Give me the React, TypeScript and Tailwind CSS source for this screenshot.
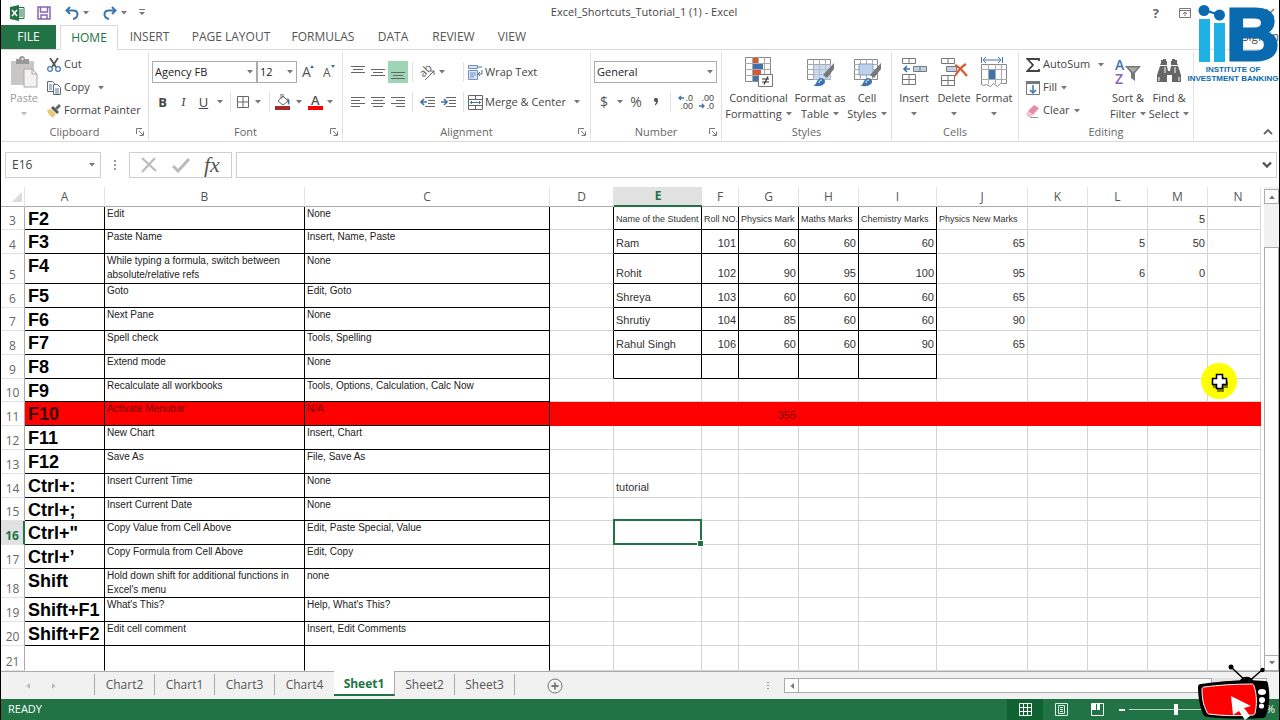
import { useState, type ReactNode } from "react";
import clsx from "clsx";

type Row = {
  n: number;
  height: string;
  key?: string;
  action?: string;
  menu?: string;
  cells?: Record<string, string | number>;
};

const columns = [
  { id: "A", width: "w-[80px]" },
  { id: "B", width: "w-[200px]" },
  { id: "C", width: "w-[245px]" },
  { id: "D", width: "w-[64px]" },
  { id: "E", width: "w-[88px]" },
  { id: "F", width: "w-[37px]" },
  { id: "G", width: "w-[60px]" },
  { id: "H", width: "w-[60px]" },
  { id: "I", width: "w-[78px]" },
  { id: "J", width: "w-[91px]" },
  { id: "K", width: "w-[60px]" },
  { id: "L", width: "w-[60px]" },
  { id: "M", width: "w-[60px]" },
  { id: "N", width: "" }
];

const rows: Row[] = [
  {
    n: 3,
    height: "h-[23px]",
    key: "F2",
    action: "Edit",
    menu: "None",
    cells: {
      E: "Name of the Student",
      F: "Roll NO.",
      G: "Physics Mark",
      H: "Maths Marks",
      I: "Chemistry Marks",
      J: "Physics New Marks",
      M: 5
    }
  },
  { n: 4, height: "h-[24px]", key: "F3", action: "Paste Name", menu: "Insert, Name, Paste", cells: { E: "Ram", F: 101, G: 60, H: 60, I: 60, J: 65, L: 5, M: 50 } },
  { n: 5, height: "h-[30px]", key: "F4", action: "While typing a formula, switch between absolute/relative refs", menu: "None", cells: { E: "Rohit", F: 102, G: 90, H: 95, I: 100, J: 95, L: 6, M: 0 } },
  { n: 6, height: "h-[24px]", key: "F5", action: "Goto", menu: "Edit, Goto", cells: { E: "Shreya", F: 103, G: 60, H: 60, I: 60, J: 65 } },
  { n: 7, height: "h-[23px]", key: "F6", action: "Next Pane", menu: "None", cells: { E: "Shrutiy", F: 104, G: 85, H: 60, I: 60, J: 90 } },
  { n: 8, height: "h-[24px]", key: "F7", action: "Spell check", menu: "Tools, Spelling", cells: { E: "Rahul Singh", F: 106, G: 60, H: 60, I: 90, J: 65 } },
  { n: 9, height: "h-[24px]", key: "F8", action: "Extend mode", menu: "None" },
  { n: 10, height: "h-[23px]", key: "F9", action: "Recalculate all workbooks", menu: "Tools, Options, Calculation, Calc Now" },
  { n: 11, height: "h-[24px]", key: "F10", action: "Activate Menubar", menu: "N/A", cells: { G: 355 } },
  { n: 12, height: "h-[24px]", key: "F11", action: "New Chart", menu: "Insert, Chart" },
  { n: 13, height: "h-[24px]", key: "F12", action: "Save As", menu: "File, Save As" },
  { n: 14, height: "h-[24px]", key: "Ctrl+:", action: "Insert Current Time", menu: "None", cells: { E: "tutorial" } },
  { n: 15, height: "h-[23px]", key: "Ctrl+;", action: "Insert Current Date", menu: "None" },
  { n: 16, height: "h-[24px]", key: 'Ctrl+"', action: "Copy Value from Cell Above", menu: "Edit, Paste Special, Value" },
  { n: 17, height: "h-[24px]", key: "Ctrl+’", action: "Copy Formula from Cell Above", menu: "Edit, Copy" },
  { n: 18, height: "h-[29px]", key: "Shift", action: "Hold down shift for additional functions in Excel's menu", menu: "none" },
  { n: 19, height: "h-[24px]", key: "Shift+F1", action: "What's This?", menu: "Help, What's This?" },
  { n: 20, height: "h-[24px]", key: "Shift+F2", action: "Edit cell comment", menu: "Insert, Edit Comments" },
  { n: 21, height: "h-[25px]" }
];

const ribbonTabs = [
  { name: "HOME", width: "w-[58px]" },
  { name: "INSERT", width: "w-[63px]" },
  { name: "PAGE LAYOUT", width: "w-[100px]" },
  { name: "FORMULAS", width: "w-[84px]" },
  { name: "DATA", width: "w-[56px]" },
  { name: "REVIEW", width: "w-[65px]" },
  { name: "VIEW", width: "w-[52px]" }
];

const sheets = ["Chart2", "Chart1", "Chart3", "Chart4", "Sheet1", "Sheet2", "Sheet3"];

function Caret({ className = "text-[#777]" }: { className?: string }) {
  return (
    <svg viewBox="0 0 6 4" className={clsx("h-1 w-1.5 shrink-0", className)} fill="currentColor">
      <path d="M0 0h6L3 3.6z" />
    </svg>
  );
}

function Group({ label, width, launcher, children }: { label: string; width: string; launcher?: boolean; children: ReactNode }) {
  return (
    <section className={clsx("flex shrink-0 flex-col", width)}>
      <div className="flex grow border-r border-[#e1e1e1]">{children}</div>
      <div className="flex h-4 items-center border-r border-[#e1e1e1] text-[#666]">
        <span className="w-3" />
        <span className="grow text-center">{label}</span>
        <span className="w-3">
          {launcher && (
            <button type="button" aria-label={`${label} settings`} className="block">
              <svg viewBox="0 0 8 8" className="size-2" fill="none" stroke="#777">
                <path d="M.5 6V.5H6M3 3l4 4M7.5 3.5v4h-4" />
              </svg>
            </button>
          )}
        </span>
      </div>
    </section>
  );
}

function Tool({ label, width, children }: { label: string; width: string; children: ReactNode }) {
  return (
    <button type="button" aria-label={label} className={clsx("flex h-[22px] shrink-0 items-center justify-center", width)}>
      {children}
    </button>
  );
}

function Divider() {
  return <span className="mx-1 h-5 w-px shrink-0 bg-[#e1e1e1]" />;
}

function BigButton({ icon, lines, width, muted }: { icon: ReactNode; lines: string[]; width: string; muted?: boolean }) {
  return (
    <button type="button" className={clsx("flex shrink-0 flex-col items-center pt-1 leading-4 whitespace-nowrap", width, muted && "text-[#999]")}>
      <span className="mb-0.5 flex h-8 items-center justify-center">{icon}</span>
      <span>{lines[0]}</span>
      <span className="flex h-4 items-center gap-1">
        {lines[1]}
        <Caret className={muted ? "text-[#bbb]" : "text-[#777]"} />
      </span>
    </button>
  );
}

function SmallButton({ icon, label, caret, gap = "gap-1" }: { icon: ReactNode; label: string; caret?: boolean; gap?: string }) {
  return (
    <button type="button" className="flex h-[23px] items-center whitespace-nowrap">
      <span className="flex w-[17px] items-center">{icon}</span>
      <span className={clsx("flex items-center", gap)}>
        {label}
        {caret && <Caret />}
      </span>
    </button>
  );
}

function Combo({ label, value, options, width }: { label: string; value: string; options: string[]; width: string }) {
  return (
    <label className={clsx("relative flex h-[22px] shrink-0 items-center", width)}>
      <span className="sr-only">{label}</span>
      <select defaultValue={value} className="h-full w-full appearance-none border border-[#ababab] bg-white pl-0.5 text-[11px] leading-5 text-[#222]">
        {options.map((option) => (
          <option key={option}>{option}</option>
        ))}
      </select>
      <span className="pointer-events-none absolute right-1">
        <Caret />
      </span>
    </label>
  );
}

function Lines({ d }: { d: string }) {
  return (
    <svg viewBox="0 0 14 14" className="size-3.5" stroke="#666" fill="none">
      <path d={d} />
    </svg>
  );
}

function PasteIcon() {
  return (
    <svg viewBox="0 0 28 32" className="h-8 w-7">
      <path d="M1 5h23v24H1z" fill="#c9c6c6" />
      <path d="M6 3h3c0-4 6-4 6 0h4v5H6z" fill="#999" />
      <circle cx="12.500" cy="3" r="1" fill="#fff" />
      <path d="M14 13h8l5 5v13H14z" fill="#f2f2f2" stroke="#aaa" />
      <path d="M22 13v5h5" fill="none" stroke="#aaa" />
    </svg>
  );
}

function CutIcon() {
  return (
    <svg viewBox="0 0 14 14" className="size-3.5" fill="none">
      <path d="M3 0l6 9M11 0L5 9" stroke="#555" strokeWidth="1.800" />
      <circle cx="3" cy="11" r="2.300" stroke="#4a7ab5" strokeWidth="1.300" />
      <circle cx="11" cy="11" r="2.300" stroke="#4a7ab5" strokeWidth="1.300" />
    </svg>
  );
}

function CopyIcon() {
  return (
    <svg viewBox="0 0 14 14" className="size-3.5" fill="#fff" stroke="#666">
      <path d="M.5.500h5l2 2v8h-7z" />
      <path d="M2 4h3M2 6h3M2 8h3" stroke="#4a7ab5" />
      <path d="M6.500 3.500h4l3 3v7h-7z" />
      <path d="M8 8h4M8 10h4M8 12h4" stroke="#4a7ab5" />
    </svg>
  );
}

function PainterIcon() {
  return (
    <svg viewBox="0 0 14 14" className="size-3.5">
      <path d="M0 6l4-1 5 5-3 3.500C3 12 1 10 0 6z" fill="#e8c777" />
      <path d="M4 4l2-2 6 6-2 2z" fill="#555" />
      <path d="M8 4l4-4 2 2-4 4z" fill="#666" />
    </svg>
  );
}

function TableStyleIcon({ filled }: { filled?: boolean }) {
  return (
    <svg viewBox="0 0 28 32" className="h-8 w-7">
      <path d="M1.500 3.500h23v20h-23z" fill="#fff" stroke="#888" />
      <path d="M1 8.500h24M1 13.500h24M1 18.500h24M7.500 3v21M13.500 3v21M19.500 3v21" stroke="#aaa" fill="none" />
      {filled ? <path d="M6 8h14v11H6z" fill="#bfd0ea" stroke="#7f9cc7" /> : <path d="M8 9h17v15H8z" fill="#b6c8e6" opacity=".7" />}
      <path d="M28 7v6l-7 9-4-3z" fill="#777" />
      <path d="M7 30c4-1 3-7 8-8 4 0 5 4 3 6-3 3-7 2-11 2z" fill="#3f73b0" />
      <path d="M13 27c0-2 1-3 3-3" stroke="#fff" fill="none" />
    </svg>
  );
}

function ConditionalIcon() {
  return (
    <svg viewBox="0 0 28 32" className="h-8 w-7">
      <path d="M.5 1.500h25v24H.5z" fill="#fff" stroke="#888" />
      <path d="M0 7.500h26M0 13.500h26M0 19.500h26M7.500 1v25M13.500 1v25M19.500 1v25" stroke="#aaa" fill="none" />
      <path d="M8 2h5v5H8zM8 14h8v5H8z" fill="#d9582f" />
      <path d="M8 8h10v5H8zM8 20h5v5H8z" fill="#3f73b0" />
      <path d="M13.500 18.500h14v12h-14z" fill="#fff" stroke="#777" />
      <path d="M17 23h7M17 26h7M23 20.500l-4 8" stroke="#333" strokeWidth="1.200" />
    </svg>
  );
}

function InsertIcon() {
  return (
    <svg viewBox="0 0 26 30" className="h-[30px] w-[26px]" fill="#fff" stroke="#777">
      <path d="M1.500 1.500h13v5h-13zM8 1.500v5M1.500 17.500h13v10h-13zM8 17.500v10M1.500 22.500h13" />
      <path d="M12.500 9.500h13v5h-13zM19 9.500v5" fill="#bfd0ea" />
      <path d="M9 12H3M6 9l-3 3 3 3" stroke="#3f73b0" strokeWidth="1.600" fill="none" />
    </svg>
  );
}

function DeleteIcon() {
  return (
    <svg viewBox="0 0 28 30" className="h-[30px] w-7" fill="#fff" stroke="#777">
      <path d="M1.500 1.500h13v5h-13zM8 1.500v5M1.500 18.500h13v10h-13zM8 18.500v10M1.500 23.500h13" />
      <path d="M6.500 9.500h10v5h-10z" fill="#bfd0ea" />
      <path d="M15 8c4 2 8 6 12 11M26 7c-5 3-8 7-11 12" stroke="#d9582f" strokeWidth="2.200" fill="none" />
    </svg>
  );
}

function FormatIcon() {
  return (
    <svg viewBox="0 0 28 32" className="h-8 w-7" fill="none">
      <path d="M1.500 1v6M22.500 1v6M3 4h18M6 1L3 4l3 3M18 1l3 3-3 3" stroke="#3f73b0" />
      <path d="M1.500 8.500h25v19h-6l-3 3-4-3-3 3-4-2-3 1-2-1z" stroke="#888" fill="#fff" />
      <path d="M1 13.500h26M1 23.500h26M8.500 8v20M15.500 8v20M21.500 8v20" stroke="#aaa" />
      <path d="M9 14h6v9H9z" fill="#3f73b0" />
    </svg>
  );
}

function SortIcon() {
  return (
    <svg viewBox="0 0 28 30" className="h-[30px] w-7" fontFamily="Open Sans" fontSize="14" fontWeight="600">
      <text x="1" y="13" fill="#3f73b0">A</text>
      <text x="1" y="27" fill="#8a5fc0">Z</text>
      <path d="M11 9h16l-6 7v8l-4-3v-5z" fill="#777" />
      <path d="M14 10.500h10l-5 5z" fill="#aaa" />
    </svg>
  );
}

function FindIcon() {
  return (
    <svg viewBox="0 0 26 28" className="h-7 w-[26px]" fill="#666">
      <path d="M5 5V2h2V1h3v2h1v4H4zM15 3h1V1h3v1h2v3l1 2h-7zM4 8h7l1 5h2l1-5h7l3 9v7h-9v-7h-5v7H1v-7z" />
      <path d="M3 19v4M9 9v6M19 9v6M23 19v4" stroke="#fff" />
    </svg>
  );
}

function DecimalIcon({ top, bottom, right }: { top: string; bottom: string; right?: boolean }) {
  return (
    <svg viewBox="0 0 15 18" className="h-[18px] w-[15px]" fontFamily="Liberation Sans" fontSize="9" fill="#444">
      <text x="15" y="8" textAnchor="end">{top}</text>
      <text x="15" y="16" textAnchor="end">{bottom}</text>
      <path d={right ? "M0 13h5M3 11l2 2-2 2" : "M6 5H1M3 3L1 5l2 2"} stroke="#3f73b0" strokeWidth="1.300" fill="none" />
    </svg>
  );
}

function TitleBar() {
  return (
    <header className="grid h-[25px] shrink-0 grid-cols-[1fr_auto_1fr] items-center pl-2">
      <div className="flex items-center">
        <svg viewBox="0 0 16 16" className="size-4">
          <path d="M8 2.500h7v11H8z" fill="#fff" stroke="#217346" />
          <path d="M10 5h4M10 7h4M10 9h4M10 11h4" stroke="#217346" />
          <path d="M1 2l9-2v16l-9-2z" fill="#217346" />
          <path d="M3 5l5 6M8 5l-5 6" stroke="#fff" strokeWidth="1.500" />
        </svg>
        <button type="button" aria-label="Save" className="ml-3">
          <svg viewBox="0 0 14 14" className="size-3.5" fill="#fff" stroke="#8a63b3" strokeWidth="1.500">
            <path d="M1 1h12v12H1zM3.500 1v5h7V1M4 13V9h6v4" />
          </svg>
        </button>
        <button type="button" aria-label="Undo" className="ml-3.5 flex items-center gap-1">
          <svg viewBox="0 0 14 14" className="size-3.5" fill="none" stroke="#3f73b0" strokeWidth="2">
            <path d="M5 1L1.500 4.500 5 8M2 4.500h6c6 0 6 7 0 8.500" />
          </svg>
          <Caret />
        </button>
        <button type="button" aria-label="Redo" className="ml-3.5 flex items-center gap-1">
          <svg viewBox="0 0 14 14" className="size-3.5" fill="none" stroke="#3f73b0" strokeWidth="2">
            <path d="M9 1l3.500 3.500L9 8M12 4.500H6c-6 0-6 7 0 8.500" />
          </svg>
          <Caret />
        </button>
        <button type="button" aria-label="Customize quick access" className="ml-3">
          <svg viewBox="0 0 6 7" className="h-[7px] w-1.5" fill="#777">
            <path d="M0 0h6v1H0zM0 3h6L3 6z" />
          </svg>
        </button>
      </div>
      <h1 className="text-center text-[11px] text-[#444]">Excel_Shortcuts_Tutorial_1 (1) - Excel</h1>
      <div className="flex items-center justify-end gap-5 pr-1 text-[#666]">
        <button type="button" aria-label="Help" className="text-[13px] leading-4 font-bold">?</button>
        <button type="button" aria-label="Ribbon display options">
          <svg viewBox="0 0 12 10" className="h-2.5 w-3" fill="none" stroke="#777">
            <path d="M.5.500h11v9H.5zM.5 2.500h11M6 8V4M4 6l2-2 2 2" />
          </svg>
        </button>
        <button type="button" aria-label="Close" className="ml-[54px]">
          <svg viewBox="0 0 10 10" className="size-2.5" stroke="#777" strokeWidth="1.500">
            <path d="M1 1l8 8M9 1L1 9" />
          </svg>
        </button>
      </div>
    </header>
  );
}

function RibbonTabs() {
  const [active, setActive] = useState("HOME");
  return (
    <nav className="flex h-[25px] shrink-0 items-stretch border-b border-[#dadada] text-[12px] text-[#555]">
      <button type="button" className="mr-1 w-[55px] bg-[#217346] text-white">FILE</button>
      {ribbonTabs.map((tab) => (
        <button
          key={tab.name}
          type="button"
          onClick={() => setActive(tab.name)}
          className={clsx(
            "whitespace-nowrap",
            tab.width,
            active === tab.name && "-mb-px border border-b-0 border-[#dadada] bg-white text-[#217346]"
          )}
        >
          {tab.name}
        </button>
      ))}
      <a href="#signin" className="ml-auto self-center">Sign in</a>
    </nav>
  );
}

function Ribbon() {
  return (
    <div className="flex h-[92px] shrink-0 border-b border-[#dadada] pt-0.5 pb-px">
      <Group label="Clipboard" width="w-[148px]" launcher>
        <BigButton icon={<PasteIcon />} lines={["Paste"]} width="w-[46px]" muted />
        <div className="flex flex-col pt-px">
          <SmallButton icon={<CutIcon />} label="Cut" />
          <SmallButton icon={<CopyIcon />} label="Copy" caret gap="gap-2" />
          <SmallButton icon={<PainterIcon />} label="Format Painter" />
        </div>
      </Group>

      <Group label="Font" width="w-[194px]" launcher>
        <div className="flex flex-col gap-2 pt-[9px] pl-[3px]">
          <div className="flex items-center">
            <Combo label="Font" value="Agency FB" options={["Agency FB", "Arial", "Calibri"]} width="w-[105px]" />
            <Combo label="Font size" value="12" options={["10", "11", "12", "14"]} width="w-[40px]" />
            <Tool label="Increase font size" width="w-[22px]">
              <svg viewBox="0 0 14 20" className="h-5 w-3.5" fontFamily="Open Sans" fontSize="14" fill="#555">
                <text x="1" y="15">A</text>
                <path d="M9 6l2-3 2 3z" fill="#3f73b0" />
              </svg>
            </Tool>
            <Tool label="Decrease font size" width="w-[20px]">
              <svg viewBox="0 0 14 20" className="h-5 w-3.5" fontFamily="Open Sans" fontSize="12" fill="#555">
                <text x="1" y="15">A</text>
                <path d="M9 3h4l-2 3z" fill="#3f73b0" />
              </svg>
            </Tool>
          </div>
          <div className="flex items-center text-[13px] leading-4 text-[#444]">
            <Tool label="Bold" width="w-[21px]"><b>B</b></Tool>
            <Tool label="Italic" width="w-[21px]"><i className="font-serif">I</i></Tool>
            <Tool label="Underline" width="w-[19px]"><u>U</u></Tool>
            <Tool label="Underline style" width="w-[13px]"><Caret /></Tool>
            <Divider />
            <Tool label="Borders" width="w-[15px]">
              <svg viewBox="0 0 14 14" className="size-3.5" fill="none" stroke="#666">
                <path d="M1.500 1.500h11v11h-11zM7 1.500v11M1.500 7h11" />
              </svg>
            </Tool>
            <Tool label="Border style" width="w-[15px]"><Caret /></Tool>
            <Divider />
            <Tool label="Fill color" width="w-[18px]">
              <svg viewBox="0 0 16 16" className="size-4">
                <path d="M3 7l5-5 5 5-5 4z" fill="#fff" stroke="#666" />
                <path d="M6 5V0h2v4" fill="none" stroke="#777" />
                <path d="M12 4c3 1 3 4 2 7-2-2-1-3-1-4z" fill="#3f73b0" />
                <path d="M0 12h15v4H0z" fill="#a32a2a" />
              </svg>
            </Tool>
            <Tool label="Fill colors" width="w-[13px]"><Caret /></Tool>
            <Tool label="Font color" width="w-[19px]">
              <svg viewBox="0 0 16 20" className="h-5 w-4" fontFamily="Open Sans" fontSize="13" fontWeight="600" fill="#555">
                <text x="4" y="13">A</text>
                <path d="M1 14h15v4H1z" fill="#f00" />
              </svg>
            </Tool>
            <Tool label="Font colors" width="w-[12px]"><Caret /></Tool>
          </div>
        </div>
      </Group>

      <Group label="Alignment" width="w-[248px]" launcher>
        <div className="flex flex-col gap-2 pt-[9px] pl-1">
          <div className="flex h-[22px] items-center">
            <Tool label="Top align" width="w-[21px]"><Lines d="M0 1.500h14M2 4.500h10M0 7.500h14" /></Tool>
            <Tool label="Middle align" width="w-[20px]"><Lines d="M0 4.500h14M2 7.500h10M0 10.500h14" /></Tool>
            <span className="bg-[#9fd5b7]">
              <Tool label="Bottom align" width="w-[20px]"><Lines d="M0 7.500h14M2 10.500h10M0 13.500h14" /></Tool>
            </span>
            <Divider />
            <Tool label="Orientation" width="w-[20px]">
              <svg viewBox="0 0 18 18" className="size-[18px]" fill="none" stroke="#666">
                <text x="2" y="12" transform="rotate(-45 7 9)" fontFamily="Open Sans" fontSize="11" fill="#555" stroke="none">ab</text>
                <path d="M7 17l9-9M12 8h4v4" />
              </svg>
            </Tool>
            <Tool label="Orientation options" width="w-[22px]"><span className="pr-3"><Caret /></span></Tool>
            <Divider />
            <SmallButton
              icon={
                <svg viewBox="0 0 15 15" className="size-[15px]" fill="#dbe5f4" stroke="#6f8fbf">
                  <path d="M.5.500h9v3h-9zM.5 5.500h9v9h-9z" />
                  <path d="M2 8h6M2 10h6M2 12h4" />
                  <path d="M10 2h4M14 5v4h-4M12 7l-2 2 2 2" fill="none" stroke="#3f73b0" />
                </svg>
              }
              label="Wrap Text"
            />
          </div>
          <div className="flex h-[22px] items-center">
            <Tool label="Align left" width="w-[21px]"><Lines d="M0 2.500h14M0 5.500h9M0 8.500h14M0 11.500h9" /></Tool>
            <Tool label="Center" width="w-[20px]"><Lines d="M0 2.500h14M2 5.500h10M0 8.500h14M2 11.500h10" /></Tool>
            <Tool label="Align right" width="w-[20px]"><Lines d="M0 2.500h14M5 5.500h9M0 8.500h14M5 11.500h9" /></Tool>
            <Divider />
            <Tool label="Decrease indent" width="w-[20px]">
              <svg viewBox="0 0 15 14" className="h-3.5 w-[15px]" fill="none" stroke="#666">
                <path d="M5 2.500h10M8 5.500h7M8 8.500h7M5 11.500h10" />
                <path d="M7 7H1M4 4L1 7l3 3" stroke="#3f73b0" strokeWidth="1.600" />
              </svg>
            </Tool>
            <Tool label="Increase indent" width="w-[22px]">
              <svg viewBox="0 0 15 14" className="h-3.5 w-[15px]" fill="none" stroke="#666">
                <path d="M5 2.500h10M8 5.500h7M8 8.500h7M5 11.500h10" />
                <path d="M0 7h6M3 4l3 3-3 3" stroke="#3f73b0" strokeWidth="1.600" />
              </svg>
            </Tool>
            <Divider />
            <SmallButton
              icon={
                <svg viewBox="0 0 15 15" className="size-[15px]" fill="none" stroke="#666">
                  <path d="M.5.500h14v14H.5zM.5 4.500h14M.5 10.500h14M7.500.500v4M7.500 10.500v4" />
                  <path d="M2 7.500h11M4 6L2.500 7.500 4 9M11 6l1.500 1.500L11 9" stroke="#3f73b0" />
                </svg>
              }
              label="Merge & Center"
              caret
              gap="gap-2"
            />
          </div>
        </div>
      </Group>

      <Group label="Number" width="w-[131px]" launcher>
        <div className="flex flex-col gap-2 pt-[9px] pl-[3px]">
          <Combo label="Number format" value="General" options={["General", "Number", "Currency"]} width="w-[123px]" />
          <div className="flex items-center text-[14px] leading-4 text-[#555]">
            <Tool label="Currency" width="w-[20px]">$</Tool>
            <Tool label="Currency options" width="w-[12px]"><Caret /></Tool>
            <Tool label="Percent" width="w-[20px]">%</Tool>
            <Tool label="Comma style" width="w-[20px]">
              <svg viewBox="0 0 6 8" className="h-2 w-1.5" fill="#555">
                <path d="M1 1.500a2 2 0 114 1c0 2-1 4-3 5V6c1-.5 1-1.500 1-2a2 2 0 01-2-2.500z" />
              </svg>
            </Tool>
            <Divider />
            <Tool label="Increase decimal" width="w-[20px]"><DecimalIcon top=".0" bottom=".00" /></Tool>
            <Tool label="Decrease decimal" width="w-[22px]"><DecimalIcon top=".00" bottom=".0" right /></Tool>
          </div>
        </div>
      </Group>

      <Group label="Styles" width="w-[170px]">
        <BigButton icon={<ConditionalIcon />} lines={["Conditional", "Formatting"]} width="w-[73px]" />
        <BigButton icon={<TableStyleIcon />} lines={["Format as", "Table"]} width="w-[50px]" />
        <BigButton icon={<TableStyleIcon filled />} lines={["Cell", "Styles"]} width="w-[44px]" />
      </Group>

      <Group label="Cells" width="w-[127px]">
        <div className="flex pl-0.5">
          <BigButton icon={<InsertIcon />} lines={["Insert"]} width="w-[40px]" />
          <BigButton icon={<DeleteIcon />} lines={["Delete"]} width="w-[40px]" />
          <BigButton icon={<FormatIcon />} lines={["Format"]} width="w-[40px]" />
        </div>
      </Group>

      <Group label="Editing" width="w-[175px]">
        <div className="flex w-[89px] flex-col pt-px pl-[7px]">
          <SmallButton
            icon={
              <svg viewBox="0 0 14 14" className="size-3.5" fill="none" stroke="#444" strokeWidth="1.800">
                <path d="M13 3V1H1.500L7 7l-5.500 6H13v-2" />
              </svg>
            }
            label="AutoSum"
            caret
            gap="gap-2"
          />
          <SmallButton
            icon={
              <svg viewBox="0 0 14 14" className="size-3.5" fill="#fff" stroke="#777">
                <path d="M.5.500h13v13H.5z" />
                <path d="M0 1.500h14" strokeWidth="3" />
                <path d="M7 4v8M4 9l3 3 3-3" stroke="#3f73b0" strokeWidth="1.500" fill="none" />
              </svg>
            }
            label="Fill"
            caret
          />
          <SmallButton
            icon={
              <svg viewBox="0 0 14 14" className="size-3.5">
                <path d="M2 7l6-6 5 3-6 7z" fill="#e88ba5" />
                <path d="M2 7l5 4-2 2H2L0 10z" fill="#f4c3d0" />
                <path d="M4 13.500h8" stroke="#999" />
              </svg>
            }
            label="Clear"
            caret
          />
        </div>
        <BigButton icon={<SortIcon />} lines={["Sort &", "Filter"]} width="w-[40px]" />
        <BigButton icon={<FindIcon />} lines={["Find &", "Select"]} width="w-[42px]" />
      </Group>

      <button type="button" aria-label="Collapse ribbon" className="mr-1.5 ml-auto self-end pb-1">
        <svg viewBox="0 0 10 8" className="h-2 w-2.5" fill="none" stroke="#666" strokeWidth="1.800">
          <path d="M1 6l4-4 4 4" />
        </svg>
      </button>
    </div>
  );
}

function FormulaBar() {
  return (
    <div className="flex h-[45px] shrink-0 items-center pr-0.5 pl-1 text-[12px]">
      <label className="relative flex h-[26px] w-[96px] items-center">
        <span className="sr-only">Name box</span>
        <input defaultValue="E16" className="h-full w-full border border-[#cfcfcf] bg-white pl-1.5 text-[#444]" />
        <span className="absolute right-1.5"><Caret /></span>
      </label>
      <svg viewBox="0 0 2 10" className="mx-[13px] h-2.5 w-0.5" fill="#999">
        <path d="M0 0h2v2H0zM0 4h2v2H0zM0 8h2v2H0z" />
      </svg>
      <div className="flex h-[26px] w-[103px] items-center justify-around border border-[#cfcfcf] px-1">
        <button type="button" aria-label="Cancel">
          <svg viewBox="0 0 16 16" className="size-4" stroke="#bbb" strokeWidth="2.200">
            <path d="M1 1l14 13M14 1L1 15" />
          </svg>
        </button>
        <button type="button" aria-label="Enter">
          <svg viewBox="0 0 18 16" className="h-4 w-[18px]" stroke="#bbb" strokeWidth="3" fill="none">
            <path d="M1 9l5 5L17 2" />
          </svg>
        </button>
        <button type="button" aria-label="Insert function" className="font-['Liberation_Serif',serif] text-[22px] leading-6 text-[#555] italic">fx</button>
      </div>
      <div className="ml-1 flex h-[26px] grow items-center border border-[#cfcfcf] pr-1">
        <input aria-label="Formula" className="h-full grow bg-white px-1 outline-none" />
        <button type="button" aria-label="Expand formula bar">
          <svg viewBox="0 0 10 8" className="h-2 w-2.5" fill="none" stroke="#555" strokeWidth="2.400">
            <path d="M1 1.500l4 4 4-4" />
          </svg>
        </button>
      </div>
    </div>
  );
}

function cellBorder(row: number, col: string) {
  if ("ABC".includes(col)) return row === 21 ? "border-r-black border-b-transparent" : "border-black";
  if (row === 11) return "border-[#f00]";
  if (row <= 9 && "EFGHI".includes(col)) return "border-black";
  if (row <= 9 && col === "D") return "border-r-black border-b-[#d4d4d4]";
  return "border-[#d4d4d4]";
}

function Cell({ row, col }: { row: Row; col: string }) {
  const base = clsx("border-r border-b p-0", cellBorder(row.n, col), row.n === 11 && "bg-[#f00]");

  if (col === "A") {
    return (
      <td className={clsx(base, "pt-0.5 pl-[3px] align-top text-[18px] leading-5 font-bold whitespace-nowrap", row.n === 11 ? "text-[#3c0000]" : "text-black")}>
        {row.key}
      </td>
    );
  }
  if (col === "B" || col === "C") {
    return (
      <td className={clsx(base, "pl-0.5 align-top text-[10px] leading-[14px]", row.n === 11 ? "text-[#7a0000]" : "text-[#222]")}>
        {col === "B" ? row.action : row.menu}
      </td>
    );
  }
  if (col === "E" && row.n === 16) {
    return (
      <td className={clsx(base, "relative")}>
        <span className="absolute -top-0.5 -right-px -bottom-px -left-px border-2 border-[#217346]" />
        <span className="absolute -right-0.5 -bottom-0.5 size-[5px] bg-[#217346] ring-1 ring-white" />
      </td>
    );
  }

  const value = row.cells?.[col];
  return (
    <td
      className={clsx(
        base,
        "overflow-hidden px-0.5 align-bottom leading-5 whitespace-nowrap",
        typeof value === "number" && "text-right",
        row.n === 3 && typeof value === "string" ? "text-[9px]" : "text-[11px]",
        row.n === 11 ? "text-[#7a0000]" : "text-[#333]"
      )}
    >
      {value}
    </td>
  );
}

function Grid() {
  return (
    <table className="w-full table-fixed border-separate border-spacing-0 font-['Liberation_Sans',Arial,sans-serif]">
      <colgroup>
        <col className="w-[24px]" />
        {columns.map((col) => (
          <col key={col.id} className={col.width} />
        ))}
      </colgroup>
      <thead>
        <tr className="h-5 font-['Open_Sans','Noto_Sans',sans-serif] text-[12px] leading-4 text-[#555]">
          <th className="border-r border-b border-r-[#e4e4e4] border-b-[#ababab] p-0">
            <svg viewBox="0 0 10 10" className="mr-0.5 ml-auto size-2.5" fill="#dcdcdc">
              <path d="M10 0v10H0z" />
            </svg>
          </th>
          {columns.map((col) => (
            <th
              key={col.id}
              scope="col"
              className={clsx(
                col.id === "N" ? "py-0 pr-0 pl-2" : "p-0",
                col.id === "E"
                  ? "border-b-2 border-[#217346] bg-[#e1e1e1] font-bold text-[#217346]"
                  : "border-r border-b border-r-[#e4e4e4] border-b-[#ababab] font-normal"
              )}
            >
              {col.id}
            </th>
          ))}
        </tr>
      </thead>
      <tbody>
        {rows.map((row) => (
          <tr key={row.n} className={row.height}>
            <th
              scope="row"
              className={clsx(
                "border-b border-b-[#e4e4e4] p-0 align-bottom font-['Open_Sans','Noto_Sans',sans-serif] text-[12px] leading-4",
                row.n === 16
                  ? "border-r-2 border-r-[#217346] bg-[#e1e1e1] font-bold text-[#217346]"
                  : "border-r border-r-[#ababab] font-normal text-[#666]"
              )}
            >
              {row.n}
            </th>
            {columns.map((col) => (
              <Cell key={col.id} row={row} col={col.id} />
            ))}
          </tr>
        ))}
      </tbody>
    </table>
  );
}

function ScrollBar() {
  return (
    <div className="ml-[3px] flex w-[15px] shrink-0 flex-col bg-[#f1f1f1] pt-0.5">
      <button type="button" aria-label="Scroll up" className="flex h-[15px] items-center justify-center border border-[#ababab] bg-white">
        <Caret className="rotate-180 text-[#777]" />
      </button>
      <div className="mt-[43px] grow border border-[#ababab] bg-white" />
      <button type="button" aria-label="Scroll down" className="flex h-[15px] items-center justify-center border border-t-0 border-[#ababab] bg-white">
        <Caret />
      </button>
    </div>
  );
}

function SheetTabs() {
  const [active, setActive] = useState("Sheet1");
  return (
    <div className="flex h-7 shrink-0 border-t border-[#ababab] bg-[#f1f1f1] text-[12px] text-[#555]">
      <div className="flex w-[93px] items-center gap-5 pl-6">
        <button type="button" aria-label="Previous sheet"><Caret className="rotate-90 text-[#bbb]" /></button>
        <button type="button" aria-label="Next sheet"><Caret className="-rotate-90 text-[#bbb]" /></button>
      </div>
      {sheets.map((sheet) => (
        <button
          key={sheet}
          type="button"
          onClick={() => setActive(sheet)}
          className={clsx(
            active === sheet
              ? "-mt-px mb-[3px] w-[61px] border-r border-b-2 border-r-[#ababab] border-b-[#217346] bg-white pt-[3px] font-bold text-[#217346]"
              : "mt-0.5 mb-1 w-[60px] border-[#ababab]",
            active !== sheet && (sheet.startsWith("Chart") ? "border-l" : "border-r")
          )}
        >
          {sheet}
        </button>
      ))}
      <button type="button" aria-label="New sheet" className="ml-8">
        <svg viewBox="0 0 16 16" className="size-4" fill="none" stroke="#777">
          <circle cx="8" cy="8" r="7" />
          <path d="M8 4.500v7M4.500 8h7" strokeWidth="1.800" />
        </svg>
      </button>
      <div className="ml-auto flex items-center pr-3">
        <svg viewBox="0 0 2 8" className="mr-[15px] h-2 w-0.5" fill="#999">
          <path d="M0 0h2v1H0zM0 3h2v1H0zM0 6h2v1H0z" />
        </svg>
        <button type="button" aria-label="Scroll left" className="flex h-[15px] w-[15px] items-center justify-center border border-[#ababab] bg-white">
          <Caret className="rotate-90 text-[#777]" />
        </button>
        <div className="h-[15px] w-[413px] border border-l-0 border-[#ababab] bg-white" />
        <div className="h-[15px] w-10 bg-[#e1e1e1]" />
        <button type="button" aria-label="Scroll right" className="flex h-[15px] w-[15px] items-center justify-center border border-[#ababab] bg-white">
          <Caret className="-rotate-90 text-[#777]" />
        </button>
      </div>
    </div>
  );
}

function StatusBar() {
  return (
    <footer className="flex h-[21px] shrink-0 items-center bg-[#217346] pr-1 pl-[7px] text-[11px] text-white">
      <span>READY</span>
      <div className="ml-auto flex h-full items-center">
        <button type="button" aria-label="Normal view" className="flex h-full w-9 items-center justify-center bg-[#0f6232]">
          <svg viewBox="0 0 13 13" className="size-[13px]" fill="none" stroke="#fff">
            <path d="M.5.500h12v12H.5zM4.500.500v12M8.500.500v12M.5 4.500h12M.5 8.500h12" />
          </svg>
        </button>
        <button type="button" aria-label="Page layout view" className="flex w-9 items-center justify-center">
          <svg viewBox="0 0 13 13" className="size-[13px]" fill="none" stroke="#dfeee5">
            <path d="M.5.500h12v12H.5zM3.500 2.500h6v8h-6zM5 4.500h3M5 6.500h3M5 8.500h3" />
          </svg>
        </button>
        <button type="button" aria-label="Page break preview" className="flex w-9 items-center justify-center">
          <svg viewBox="0 0 13 13" className="size-[13px]" fill="none" stroke="#fff">
            <path d="M.5.500h12v12H.5z" />
            <path d="M1 1h4v6H1zM6 1h3v6H6z" fill="#fff" stroke="none" />
          </svg>
        </button>
        <button type="button" aria-label="Zoom out" className="ml-1 h-0.5 w-1.5 bg-white" />
        <input
          type="range"
          aria-label="Zoom"
          defaultValue={50}
          className="ml-1 h-3 w-[94px] appearance-none bg-[linear-gradient(#b9d5c5,#b9d5c5)] bg-[length:100%_1px] bg-center bg-no-repeat [&::-webkit-slider-thumb]:h-[11px] [&::-webkit-slider-thumb]:w-1 [&::-webkit-slider-thumb]:appearance-none [&::-webkit-slider-thumb]:bg-white"
        />
        <span className="ml-6">100%</span>
      </div>
    </footer>
  );
}

function InstituteLogo() {
  return (
    <div className="pointer-events-none absolute top-0 right-0 flex w-[92px] flex-col items-center font-['Liberation_Sans',Arial,sans-serif] text-[8px] leading-[9px] font-bold whitespace-nowrap text-[#0a6ab0]">
      <svg viewBox="0 0 92 65" className="h-[65px] w-[92px]">
        <path d="M12 19h11v43H12zM27 23h11v39H27z" fill="#1fb0e4" />
        <path d="M17 10l16 5" stroke="#0a6ab0" strokeWidth="2" />
        <circle cx="17" cy="10.500" r="5.500" fill="#0a6ab0" />
        <circle cx="32.500" cy="15" r="5.500" fill="#0a6ab0" />
        <text x="39" y="60" fontSize="74" fontWeight="700" fill="#0a6ab0" stroke="#0a6ab0" strokeWidth="3">B</text>
      </svg>
      <span>INSTITUTE OF</span>
      <span>INVESTMENT BANKING</span>
    </div>
  );
}

function TvLogo() {
  return (
    <svg viewBox="0 0 74 56" className="pointer-events-none absolute right-2 bottom-0 h-14 w-[74px]">
      <path d="M34 3l17 16M65 6L50 19" stroke="#000" strokeWidth="1.500" />
      <circle cx="34" cy="3" r="2.500" />
      <circle cx="65.500" cy="6" r="2.200" />
      <path d="M42 18c3-7 12-7 15 0z" />
      <path d="M1 23c0-2 1-3 3-3 20-3 45-5 64-3 2 0 3 1 3 3 2 9 2 22-2 31 0 2-1 2-3 3-17 1-38 1-55-1-3 0-4-1-5-3C3 43 1 33 1 23z" />
      <path d="M5 25c0-1 1-2 2-2 15-2 32-3 48-3 1 0 2 1 2 2 3 9 3 19 1 27 0 1-1 2-2 2-14 1-31 1-44-1-1 0-2-1-2-2-4-7-5-15-5-23z" fill="#f00" stroke="#fff" />
      <ellipse cx="65" cy="28" rx="4" ry="3" fill="#fff" />
      <circle cx="65" cy="36" r="3" fill="#fff" />
      <circle cx="64.500" cy="42" r="2.600" fill="#fff" />
      <path d="M34 32l20 10-7 2 6 8-5 4-6-9-6 4z" fill="#fff" />
    </svg>
  );
}

function Pointer() {
  return (
    <svg viewBox="0 0 36 38" className="pointer-events-none absolute top-[362px] right-[42px] h-[38px] w-9">
      <circle cx="18" cy="19" r="18" fill="#ff0" />
      <path d="M16 15h7v4h4v7h-4v4h-7v-4h-4v-7h4z" fill="#000" opacity=".5" />
      <path d="M15.500 12.500h6v4h4v6h-4v4h-6v-4h-4v-6h4z" fill="#fff" stroke="#000" strokeWidth="1.500" />
    </svg>
  );
}

export default function App() {
  return (
    <div className="relative flex h-screen flex-col overflow-hidden border-x border-black bg-white font-['Open_Sans','Noto_Sans',sans-serif] text-[11px] text-[#444]">
      <TitleBar />
      <RibbonTabs />
      <Ribbon />
      <FormulaBar />
      <main className="flex min-h-0 grow">
        <div className="min-w-0 grow overflow-hidden">
          <Grid />
        </div>
        <ScrollBar />
      </main>
      <SheetTabs />
      <StatusBar />
      <InstituteLogo />
      <TvLogo />
      <Pointer />
    </div>
  );
}
